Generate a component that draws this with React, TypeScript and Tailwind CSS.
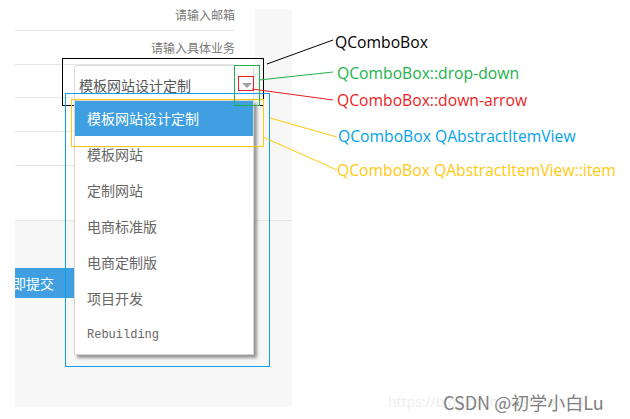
import React from "react";

const items = ["模板网站设计定制", "模板网站", "定制网站", "电商标准版", "电商定制版", "项目开发"];

const cjk = { fontFamily: '"Noto Sans CJK SC", "Noto Sans", sans-serif' };
const latin = { fontFamily: '"Open Sans", "Noto Sans", sans-serif' };

const labels = [
  { text: "QComboBox", cls: "left-[335px] top-[30px] text-black" },
  { text: "QComboBox::drop-down", cls: "left-[337px] top-[61px] text-[#22b14c]" },
  { text: "QComboBox::down-arrow", cls: "left-[337px] top-[88px] text-[#ed1c24]" },
  { text: "QComboBox QAbstractItemView", cls: "left-[338px] top-[124px] text-[#00a2e8]" },
  { text: "QComboBox QAbstractItemView::item", cls: "left-[337px] top-[158px] text-[#ffc90e]" },
];

export default function App() {
  return (
    <div className="relative h-[419px] w-[630px] overflow-hidden bg-white" style={cjk}>
      {/* form panel */}
      <div className="ml-[15px] flex h-[407px] w-[277px] flex-col">
        <div className="flex h-[220px]">
          <div className="w-[240px]">
            <div className="flex h-[31px] w-[220px] items-center justify-end border-b border-[#e5e5e5] text-[12px] text-[#777]">
              请输入邮箱
            </div>
            <div className="flex h-[34px] w-[220px] items-center justify-end border-b border-[#e5e5e5] text-[12px] text-[#777]">
              请输入具体业务
            </div>
            <div className="h-[33px] w-[220px] border-b border-[#e5e5e5]" />
            <div className="h-[34px] w-[220px] border-b border-[#e5e5e5]" />
            <div className="h-[34px] w-[220px] border-b border-[#e5e5e5]" />
          </div>
          <div className="mt-[9px] flex-1 bg-[#f7f7f7]" />
        </div>
        <div className="flex-1 border-t border-[#e5e5e5] bg-[#f7f7f7] pt-[47px]">
          <div className="flex h-[30px] w-[59px] items-center overflow-hidden bg-[#409fe0] text-[14px] text-white">
            <span className="ml-[-17px] whitespace-nowrap">立即提交</span>
          </div>
        </div>
      </div>

      {/* black annotation box (under the popup) */}
      <div className="absolute left-[62px] top-[58px] h-[48px] w-[202px] border border-black" />

      {/* combo box */}
      <div className="absolute left-[74px] top-[65px] flex h-[40px] w-[180px] items-center rounded-[3px] border border-[#dadada] bg-white pl-[4px] text-[14px] text-[#555]">
        模板网站设计定制
        <div className="absolute left-[167px] top-[17px] h-0 w-0 border-x-[5px] border-t-[5px] border-x-transparent border-t-[#a0a0a0]" />
      </div>

      {/* popup list */}
      <div className="absolute left-[74px] top-[100px] w-[180px] border border-[#d6d6d6] bg-white shadow-[3px_3px_3px_rgba(0,0,0,0.4)]">
        {items.map((t, i) => (
          <div
            key={t}
            className={`flex items-center pl-[12px] text-[14px] ${
              i === 0 ? "h-[35px] bg-[#409fe0] text-white" : "h-[36px] text-[#666]"
            }`}
          >
            {t}
          </div>
        ))}
        <div
          className="flex h-[38px] items-center pl-[12px] text-[12px] text-[#666]"
          style={{ fontFamily: '"Liberation Mono", monospace' }}
        >
          Rebuilding
        </div>
      </div>

      {/* annotation boxes */}
      <div className="absolute left-[65px] top-[93px] h-[274px] w-[205px] border border-[#0ea0e6]" />
      <div className="absolute left-[71px] top-[99px] h-[48px] w-[193px] border border-[#ffc90e]" />
      <div className="absolute left-[234px] top-[65px] h-[41px] w-[26px] border border-[#22b14c]" />
      <div className="absolute left-[238px] top-[76px] h-[15px] w-[16px] border border-[#ed1c24]" />

      {/* leader lines */}
      <svg className="absolute left-0 top-0" width="630" height="419">
        <line x1="267" y1="64" x2="333" y2="40" stroke="#000" strokeWidth="1" />
        <line x1="259" y1="80" x2="333" y2="72" stroke="#22b14c" strokeWidth="1" />
        <line x1="252" y1="89" x2="333" y2="100" stroke="#ed1c24" strokeWidth="1" />
        <line x1="270" y1="118" x2="337" y2="137" stroke="#ffc90e" strokeWidth="1" />
        <line x1="263" y1="137" x2="337" y2="170" stroke="#ffc90e" strokeWidth="1" />
      </svg>

      {labels.map((l) => (
        <div key={l.text} className={`absolute whitespace-nowrap text-[15.7px] leading-[24px] ${l.cls}`} style={latin}>
          {l.text}
        </div>
      ))}

      {/* watermark */}
      <div className="absolute left-[388px] top-[392px] whitespace-nowrap text-[14px] leading-[20px] text-[#ececec]" style={latin}>
        https://blog.csdn.net/weixin_4
      </div>
      <div className="absolute left-[443px] top-[389px] whitespace-nowrap text-[18px] leading-[26px] text-[#808080] [text-shadow:0_0_2px_#fff]">
        CSDN @初学小白Lu
      </div>
    </div>
  );
}
